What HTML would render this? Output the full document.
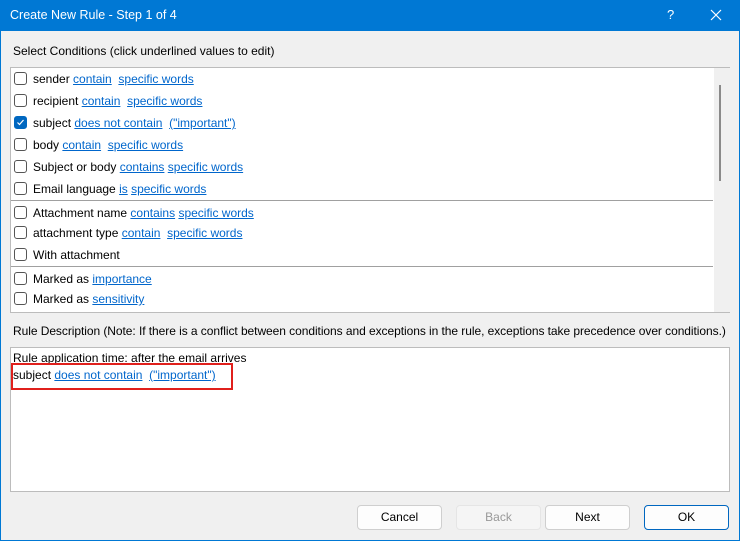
<!DOCTYPE html>
<html><head><style>
*{margin:0;padding:0;box-sizing:border-box}
body{width:740px;height:541px;background:#f0f0f0;font-family:"Liberation Sans",sans-serif;font-size:12px;color:#000;position:relative;overflow:hidden}
.title{position:absolute;left:0;top:0;width:740px;height:31px;background:#0078d4;color:#fff;font-size:12.5px}
.title span{position:absolute;left:10px;top:8px}
.frame{position:absolute;left:0;top:31px;width:740px;height:510px;border:1px solid #0078d4;border-top:none}
.abs{position:absolute;white-space:nowrap}
a{color:#0066cc;text-decoration:underline}
.list{position:absolute;left:10px;top:67px;width:720px;height:246px;background:#fff;border:1px solid #bcbcbc}
.sb{position:absolute;left:703px;top:0;width:16px;height:244px;background:#f0f0f0}
.thumb{position:absolute;left:708px;top:17px;width:2px;height:96px;background:#8a8a8a}
.row{position:absolute;left:3px;height:16px}
.cb{position:absolute;left:0;top:0;width:13px;height:13px;border:1px solid #555;border-radius:3px;background:#fff}
.cb.on{background:#0067c0;border-color:#0067c0}
.row .t{position:absolute;left:19px;top:0;white-space:nowrap}
.sep{position:absolute;left:0;width:702px;height:1px;background:#a0a0a0}
.desc{position:absolute;left:10px;top:347px;width:720px;height:145px;background:#fff;border:1px solid #bcbcbc}
.btn{position:absolute;top:505px;width:85px;height:25px;border:1px solid #cfcfcf;border-radius:4px;background:#fdfdfd;text-align:center;line-height:23px}
</style></head><body>
<div class="title"><span>Create New Rule - Step 1 of 4</span>
<div class="abs" style="left:667px;top:7px;font-size:13px">?</div>
<svg class="abs" style="left:710px;top:9px" width="12" height="12"><path d="M1 1L11 11M11 1L1 11" stroke="#fff" stroke-width="1.2"/></svg>
</div>
<div class="frame"></div>
<div class="abs" style="left:13px;top:44px">Select Conditions (click underlined values to edit)</div>
<div class="list">
<div class="sb"></div><div class="thumb"></div>
<div class="row" style="top:4px"><div class="cb"></div><div class="t">sender <a>contain</a>&nbsp; <a>specific words</a></div></div>
<div class="row" style="top:26px"><div class="cb"></div><div class="t">recipient <a>contain</a>&nbsp; <a>specific words</a></div></div>
<div class="row" style="top:48px"><div class="cb on"><svg width="11" height="11" style="position:absolute;left:0;top:0"><path d="M2.5 5.5L4.5 7.5L8.5 3" stroke="#fff" stroke-width="1.2" fill="none"/></svg></div><div class="t">subject <a>does not contain</a>&nbsp; <a>("important")</a></div></div>
<div class="row" style="top:70px"><div class="cb"></div><div class="t">body <a>contain</a>&nbsp; <a>specific words</a></div></div>
<div class="row" style="top:92px"><div class="cb"></div><div class="t">Subject or body <a>contains</a> <a>specific words</a></div></div>
<div class="row" style="top:114px"><div class="cb"></div><div class="t">Email language <a>is</a> <a>specific words</a></div></div>
<div class="sep" style="top:132px"></div>
<div class="row" style="top:138px"><div class="cb"></div><div class="t">Attachment name <a>contains</a> <a>specific words</a></div></div>
<div class="row" style="top:158px"><div class="cb"></div><div class="t">attachment type <a>contain</a>&nbsp; <a>specific words</a></div></div>
<div class="row" style="top:180px"><div class="cb"></div><div class="t">With attachment</div></div>
<div class="sep" style="top:198px"></div>
<div class="row" style="top:204px"><div class="cb"></div><div class="t">Marked as <a>importance</a></div></div>
<div class="row" style="top:224px"><div class="cb"></div><div class="t">Marked as <a>sensitivity</a></div></div>
</div>
<div class="abs" style="left:13px;top:324px;letter-spacing:-0.06px">Rule Description (Note: If there is a conflict between conditions and exceptions in the rule, exceptions take precedence over conditions.)</div>
<div class="desc">
<div class="abs" style="left:2px;top:3px">Rule application time: after the email arrives</div>
<div class="abs" style="left:2px;top:20px">subject <a>does not contain</a>&nbsp; <a>("important")</a></div>
<div class="abs" style="left:0px;top:15px;width:222px;height:27px;border:2px solid #e0201c"></div>
</div>
<div class="btn" style="left:357px">Cancel</div>
<div class="btn" style="left:456px;color:#999;background:#f5f5f5;border-color:#e5e5e5">Back</div>
<div class="btn" style="left:545px">Next</div>
<div class="btn" style="left:644px;border-color:#0067c0">OK</div>
</body></html>
